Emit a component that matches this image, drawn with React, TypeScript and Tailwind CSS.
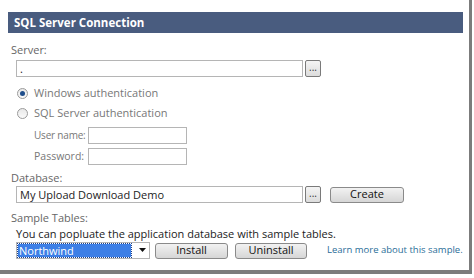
import React from 'react';

const Input = ({ value = '', className = '' }: { value?: string; className?: string }) => (
  <div className={`h-[17px] shrink-0 border border-[#b5b5b5] bg-white px-[3px] text-[11px] leading-[15px] text-[#222] ${className}`}>
    {value}
  </div>
);

const Browse = () => (
  <div className="ml-[2px] flex h-[17px] w-[16px] shrink-0 items-center justify-center rounded-[2px] border border-[#7a7a7a] bg-gradient-to-b from-[#f4f4f4] to-[#dcdcdc] text-[10px] leading-none text-[#333]">
    <span className="-mt-[3px]">...</span>
  </div>
);

const Button = ({ label, className = '' }: { label: string; className?: string }) => (
  <div className={`flex h-[16px] shrink-0 items-center justify-center rounded-[3px] border border-[#8a8a8a] bg-gradient-to-b from-[#f2f2f2] to-[#d6d6d6] text-[11px] text-[#111] ${className}`}>
    {label}
  </div>
);

const Radio = ({ checked, label }: { checked?: boolean; label: string }) => (
  <div className="flex h-[20px] items-center pl-[6px]">
    <div className="flex h-[11px] w-[11px] items-center justify-center rounded-full border border-[#9a9a9a] bg-gradient-to-b from-[#e8e8e8] to-[#fafafa]">
      {checked && <div className="h-[5px] w-[5px] rounded-full bg-[#1f4e8c]" />}
    </div>
    <span className="ml-[6px] text-[11px] text-[#777]">{label}</span>
  </div>
);

export default function App() {
  return (
    <div className="h-[278px] w-[474px] overflow-hidden bg-white" style={{ fontFamily: '"Open Sans", "Noto Sans", sans-serif' }}>
      <div className="h-[274px] w-[472px] border-r-[3px] border-b-[4px] border-[#7c7c7c] pt-[12px] pl-[8px] pr-[6px]">
        <div className="flex h-[21px] items-center bg-[#495c7f] pl-[6px] text-[11.5px] font-bold text-white">
          SQL Server Connection
        </div>

        <div className="pl-[3px]">
          <div className="mt-[9px] text-[11px] leading-[16px] text-[#666]">Server:</div>
          <div className="mt-[2px] flex pl-[5px]">
            <Input value="." className="w-[287px]" />
            <Browse />
          </div>

          <div className="mt-[6px]">
            <Radio checked label="Windows authentication" />
            <Radio label="SQL Server authentication" />
          </div>

          <div className="mt-[4px] flex flex-col gap-[4px] pl-[23px]">
            <div className="flex items-center">
              <span className="w-[54px] shrink-0 whitespace-nowrap text-[10px] tracking-[-0.2px] text-[#777]">User name:</span>
              <Input className="w-[99px]" />
            </div>
            <div className="flex items-center">
              <span className="w-[54px] shrink-0 whitespace-nowrap text-[10.5px] text-[#777]">Password:</span>
              <Input className="w-[99px]" />
            </div>
          </div>

          <div className="mt-[5px] text-[11px] leading-[16px] text-[#666]">Database:</div>
          <div className="flex items-center pl-[5px]">
            <Input value="My Upload Download Demo" className="w-[287px]" />
            <Browse />
            <Button label="Create" className="ml-[9px] w-[74px]" />
          </div>

          <div className="mt-[7px] text-[11px] leading-[16px] text-[#666]">Sample Tables:</div>
          <div className="pl-[5px] text-[11px] leading-[15px] text-[#222]">
            You can popluate the application database with sample tables.
          </div>
          <div className="mt-[1px] flex items-center pl-[5px]">
            <div className="flex h-[17px] w-[134px] shrink-0 items-center border border-[#b5b5b5] bg-white pl-[1px]">
              <div className="h-[13px] w-[113px] bg-[#3d7fe6] pl-[1px] text-[11px] leading-[13px] text-white outline outline-1 outline-dotted outline-[#1c3f8a]">
                Northwind
              </div>
              <svg width="8" height="5" viewBox="0 0 8 5" className="ml-[8px]">
                <path d="M0 0H7L3.5 4Z" fill="#111" />
              </svg>
            </div>
            <Button label="Install" className="ml-[5px] w-[73px]" />
            <Button label="Uninstall" className="ml-[7px] w-[72px]" />
            <span className="ml-[20px] whitespace-nowrap text-[9.5px] text-[#2a6d98]">Learn more about this sample.</span>
          </div>
        </div>
      </div>
    </div>
  );
}
